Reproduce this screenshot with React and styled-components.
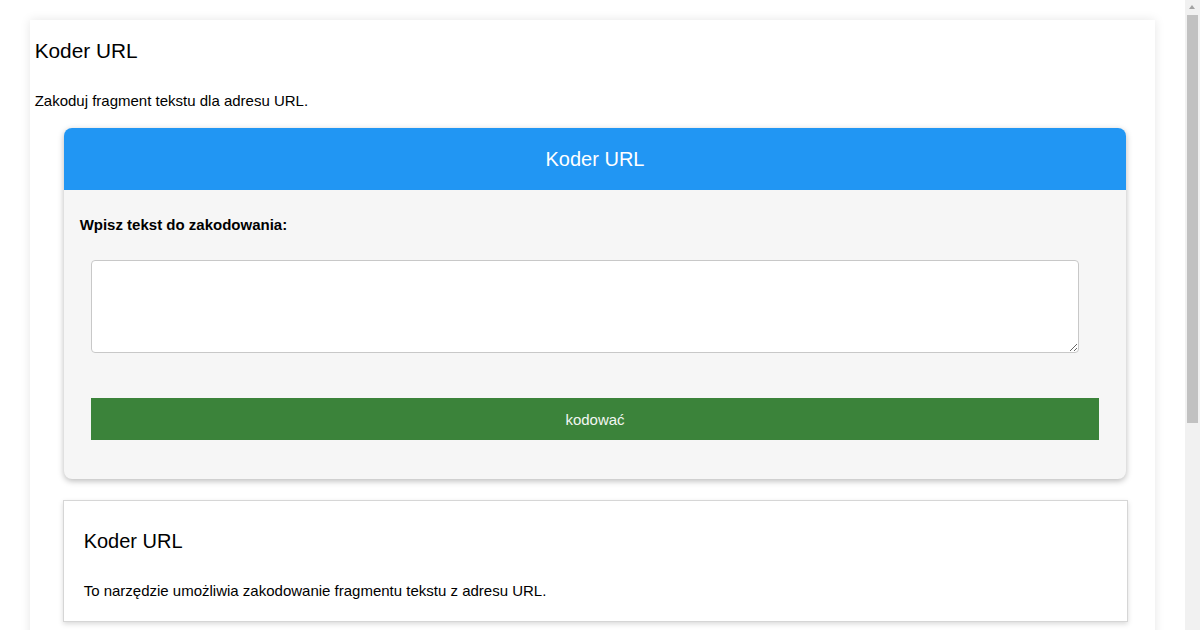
import React, { useState } from "react";
import styled, { createGlobalStyle } from "styled-components";

const GlobalStyle = createGlobalStyle`
  html, body {
    margin: 0;
    padding: 0;
    background: #fff;
    font-family: "Liberation Sans", Arial, sans-serif;
    color: #000;
  }
  body {
    margin-right: 15px;
  }
  * {
    box-sizing: border-box;
  }
`;

// stand-in for the browser's vertical scrollbar seen in the screenshot
const ScrollTrack = styled.div`
  position: fixed;
  top: 0;
  right: 0;
  width: 15px;
  height: 100vh;
  background: #f1f1f1;
`;

const ScrollArrow = styled.div`
  position: absolute;
  top: 5px;
  left: 4px;
  width: 0;
  height: 0;
  border-left: 3.5px solid transparent;
  border-right: 3.5px solid transparent;
  border-bottom: 4px solid #a3a3a3;
`;

const ScrollThumb = styled.div`
  position: absolute;
  top: 15px;
  left: 2px;
  width: 11px;
  height: 408px;
  background: #c1c1c1;
`;

const Container = styled.div`
  width: 95%;
  margin: 20px auto 40px;
  padding: 5px 5px 30px;
  background: #fff;
  box-shadow: 0 0 10px rgba(0, 0, 0, 0.1);
`;

const PageTitle = styled.h1`
  margin: 14px 0 0;
  font-size: 20.8px;
  line-height: 24px;
  font-weight: normal;
`;

const Lead = styled.p`
  margin: 29px 0 0;
  font-size: 15px;
  line-height: 17px;
`;

const Section = styled.section`
  padding: 0 24px 0 29px;
`;

const ToolCard = styled.div`
  margin-top: 19px;
  background: #f6f6f6;
  border-radius: 8px;
  overflow: hidden;
  box-shadow: 0 2px 6px rgba(0, 0, 0, 0.28);
`;

const ToolHeader = styled.div`
  background: #2196f3;
  color: #fff;
  text-align: center;
  padding: 20px;
  font-size: 20px;
  line-height: 22px;
`;

const ToolBody = styled.div`
  padding: 26px 16px 39px;
`;

const Label = styled.label`
  display: block;
  font-size: 15px;
  line-height: 17px;
  font-weight: bold;
  margin-bottom: 27px;
`;

const Field = styled.div`
  padding: 0 11px;
`;

const TextArea = styled.textarea`
  display: block;
  width: 98%;
  height: 93px;
  margin: 0 0 45px;
  padding: 8px;
  border: 1px solid #c8c8c8;
  border-radius: 4px;
  background: #fff;
  font-family: "Liberation Sans", Arial, sans-serif;
  font-size: 15px;
`;

const Button = styled.button`
  display: block;
  width: 100%;
  height: 42px;
  border: none;
  background: #3b833a;
  color: #f2f6f2;
  font-family: "Liberation Sans", Arial, sans-serif;
  font-size: 15px;
  cursor: pointer;
`;

const InfoCard = styled.div`
  margin: 21px -2px 0 -1px;
  background: #fff;
  border: 1px solid #d6d6d6;
  padding: 20px 20px 22px;
  box-shadow: 0 2px 5px rgba(0, 0, 0, 0.15);
`;

const InfoTitle = styled.h2`
  margin: 8.5px 0 0;
  font-size: 20px;
  line-height: 23px;
  font-weight: normal;
`;

const InfoText = styled.p`
  margin: 29.5px 0 0;
  font-size: 15px;
  line-height: 17px;
`;

export default function App() {
  const [text, setText] = useState("");

  return (
    <>
      <GlobalStyle />
      <Container>
        <PageTitle>Koder URL</PageTitle>
        <Lead>Zakoduj fragment tekstu dla adresu URL.</Lead>
        <Section>
          <ToolCard>
            <ToolHeader>Koder URL</ToolHeader>
            <ToolBody>
              <Label htmlFor="source">Wpisz tekst do zakodowania:</Label>
              <Field>
                <TextArea
                  id="source"
                  value={text}
                  onChange={(e) => setText(e.target.value)}
                />
                <Button onClick={() => setText(encodeURIComponent(text))}>
                  kodować
                </Button>
              </Field>
            </ToolBody>
          </ToolCard>
          <InfoCard>
            <InfoTitle>Koder URL</InfoTitle>
            <InfoText>
              To narzędzie umożliwia zakodowanie fragmentu tekstu z adresu URL.
            </InfoText>
          </InfoCard>
        </Section>
      </Container>
      <ScrollTrack>
        <ScrollArrow />
        <ScrollThumb />
      </ScrollTrack>
    </>
  );
}
